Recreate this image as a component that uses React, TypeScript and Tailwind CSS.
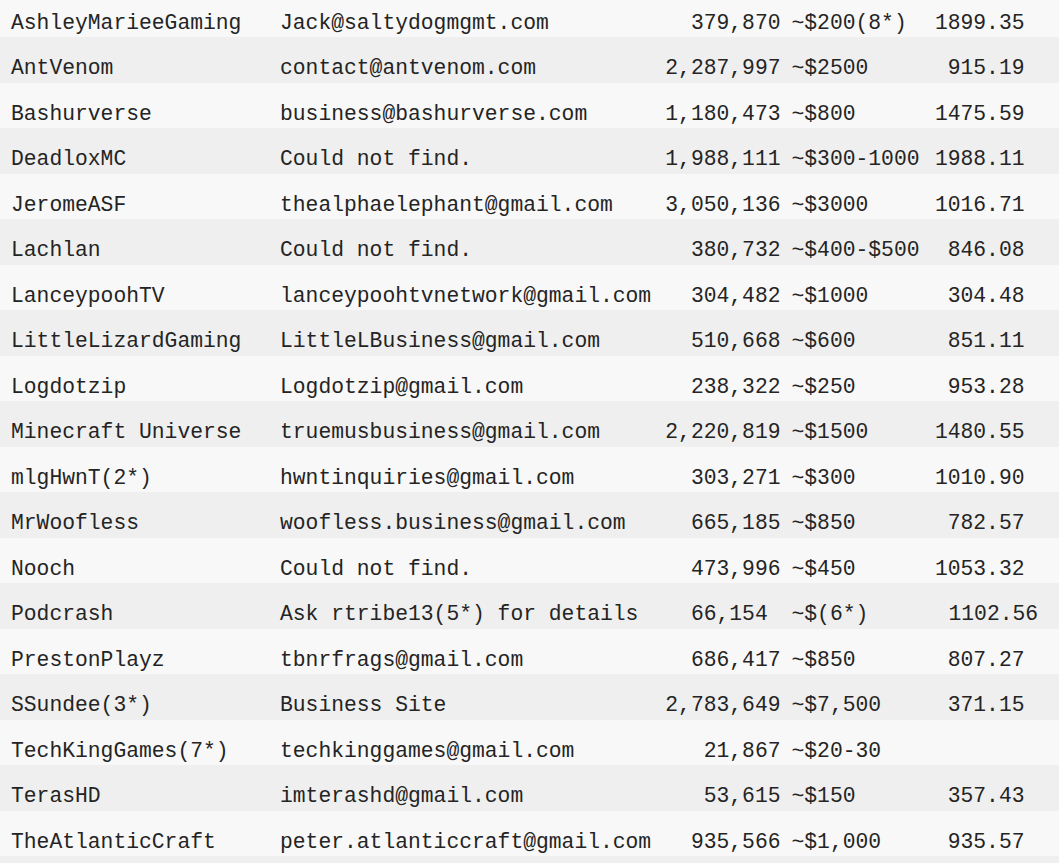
import React from 'react';

type Row = {
  name: string;
  contact: string;
  subs: string;
  price: string;
  rate: string;
  odd?: boolean;
};

const rows: Row[] = [
  { name: 'AshleyMarieeGaming', contact: 'Jack@saltydogmgmt.com', subs: '379,870', price: '~$200(8*)', rate: '1899.35' },
  { name: 'AntVenom', contact: 'contact@antvenom.com', subs: '2,287,997', price: '~$2500', rate: '915.19' },
  { name: 'Bashurverse', contact: 'business@bashurverse.com', subs: '1,180,473', price: '~$800', rate: '1475.59' },
  { name: 'DeadloxMC', contact: 'Could not find.', subs: '1,988,111', price: '~$300-1000', rate: '1988.11' },
  { name: 'JeromeASF', contact: 'thealphaelephant@gmail.com', subs: '3,050,136', price: '~$3000', rate: '1016.71' },
  { name: 'Lachlan', contact: 'Could not find.', subs: '380,732', price: '~$400-$500', rate: '846.08' },
  { name: 'LanceypoohTV', contact: 'lanceypoohtvnetwork@gmail.com', subs: '304,482', price: '~$1000', rate: '304.48' },
  { name: 'LittleLizardGaming', contact: 'LittleLBusiness@gmail.com', subs: '510,668', price: '~$600', rate: '851.11' },
  { name: 'Logdotzip', contact: 'Logdotzip@gmail.com', subs: '238,322', price: '~$250', rate: '953.28' },
  { name: 'Minecraft Universe', contact: 'truemusbusiness@gmail.com', subs: '2,220,819', price: '~$1500', rate: '1480.55' },
  { name: 'mlgHwnT(2*)', contact: 'hwntinquiries@gmail.com', subs: '303,271', price: '~$300', rate: '1010.90' },
  { name: 'MrWoofless', contact: 'woofless.business@gmail.com', subs: '665,185', price: '~$850', rate: '782.57' },
  { name: 'Nooch', contact: 'Could not find.', subs: '473,996', price: '~$450', rate: '1053.32' },
  { name: 'Podcrash', contact: 'Ask rtribe13(5*) for details', subs: '66,154', price: '~$(6*)', rate: '1102.56', odd: true },
  { name: 'PrestonPlayz', contact: 'tbnrfrags@gmail.com', subs: '686,417', price: '~$850', rate: '807.27' },
  { name: 'SSundee(3*)', contact: 'Business Site', subs: '2,783,649', price: '~$7,500', rate: '371.15' },
  { name: 'TechKingGames(7*)', contact: 'techkinggames@gmail.com', subs: '21,867', price: '~$20-30', rate: '' },
  { name: 'TerasHD', contact: 'imterashd@gmail.com', subs: '53,615', price: '~$150', rate: '357.43' },
  { name: 'TheAtlanticCraft', contact: 'peter.atlanticcraft@gmail.com', subs: '935,566', price: '~$1,000', rate: '935.57' },
  { name: '', contact: '', subs: '', price: '', rate: '' },
];

export default function App() {
  return (
    <div className="w-[1059px] h-[863px] overflow-hidden bg-[#f8f8f8] text-[#242424] font-['Liberation_Mono',monospace] text-[21.33px] leading-[28px]">
      <div className="-mt-[8.5px]">
        {rows.map((r, i) => (
          <div
            key={i}
            className={`flex h-[45.5px] pt-[17px] pl-[11px] whitespace-pre ${i % 2 === 0 ? 'bg-[#f8f8f8]' : 'bg-[#efefef]'}`}
          >
            <div className="w-[269px]">{r.name}</div>
            <div className="w-[374px]">{r.contact}</div>
            <div className={`w-[126.5px] text-right ${r.odd ? 'pr-[12.8px]' : ''}`}>{r.subs}</div>
            <div className="ml-[11px] w-[133px]">{r.price}</div>
            <div className={`w-[100px] ${r.odd ? 'pl-[24px]' : 'text-right'}`}>{r.rate}</div>
          </div>
        ))}
      </div>
    </div>
  );
}
